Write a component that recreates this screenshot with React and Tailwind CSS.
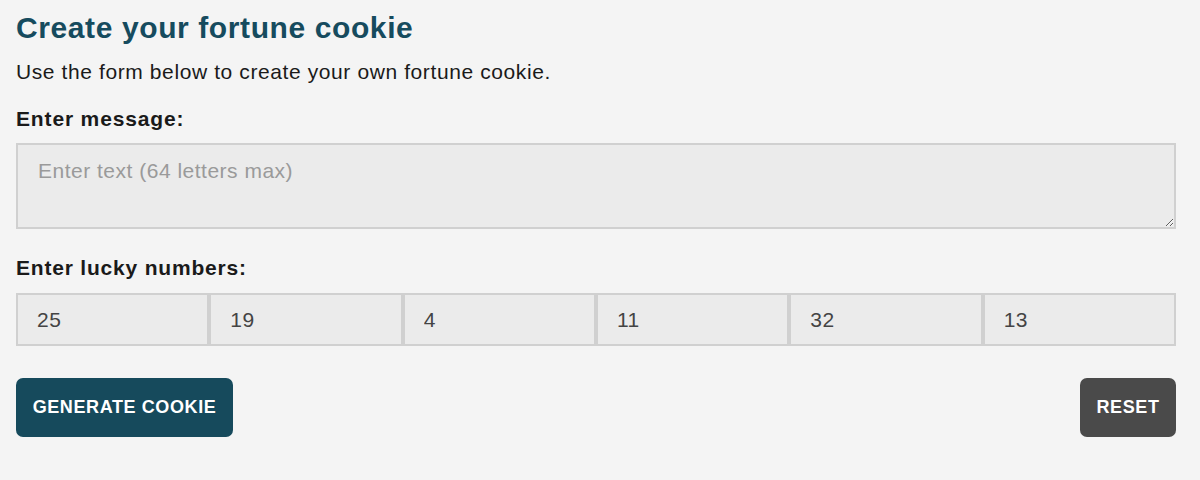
import React from "react";

export default function App() {
  const nums = ["25", "19", "4", "11", "32", "13"];
  return (
    <div className="min-h-[480px] w-[1200px] bg-[#f4f4f4] pl-4 pr-6 pt-[10px] font-['Liberation_Sans',Arial,sans-serif] text-[#222]">
      <h1 className="text-[30px] font-bold leading-[36px] tracking-[0.6px] text-[#164b5e]">Create your fortune cookie</h1>
      <p className="mt-[12px] text-[21px] leading-[28px] tracking-[0.6px] text-[#1a1a1a]">Use the form below to create your own fortune cookie.</p>
      <label className="mt-[19px] block text-[21px] font-bold leading-[28px] tracking-[0.85px] text-[#1a1a1a]">Enter message:</label>
      <textarea
        className="mt-[10px] block h-[86px] w-full resize-y border-2 border-[#d0d0d0] bg-[#ebebeb] px-[20px] pt-[12px] text-[21px] leading-[28px] tracking-[0.5px] text-[#444] placeholder:text-[#9a9a9a] outline-none"
        placeholder="Enter text (64 letters max)"
      />
      <label className="mt-[25px] block text-[21px] font-bold leading-[28px] tracking-[0.8px] text-[#1a1a1a]">Enter lucky numbers:</label>
      <div className="mt-[11px] grid grid-cols-6">
        {nums.map((n, i) => (
          <input
            key={i}
            defaultValue={n}
            className="h-[53px] w-full min-w-0 border-2 border-[#d0d0d0] bg-[#ebebeb] px-[19px] text-[21px] tracking-[0.5px] text-[#444] outline-none"
          />
        ))}
      </div>
      <div className="mt-[32px] flex items-center justify-between">
        <button className="h-[59px] w-[217px] rounded-[7px] bg-[#164a5c] text-center text-[18px] font-bold tracking-[0.6px] text-white">GENERATE COOKIE</button>
        <button className="h-[59px] w-[96px] rounded-[7px] bg-[#4a4a4a] text-center text-[18px] font-bold tracking-[0.6px] text-white">RESET</button>
      </div>
    </div>
  );
}
